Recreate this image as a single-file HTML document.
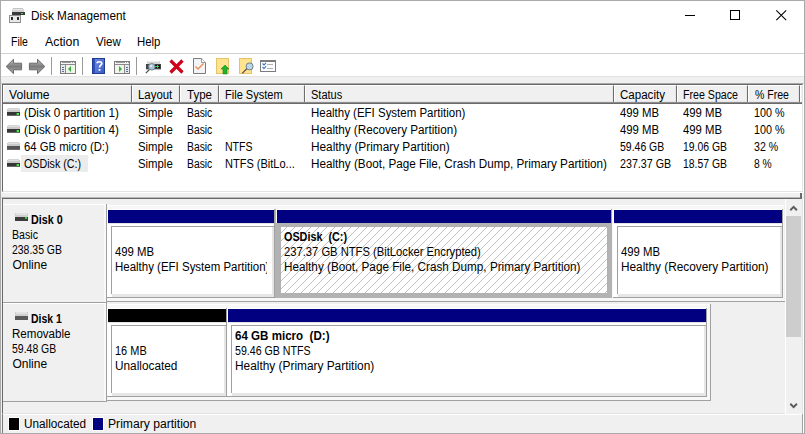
<!DOCTYPE html>
<html><head><meta charset="utf-8">
<style>
html,body{margin:0;padding:0}
body{width:805px;height:434px;overflow:hidden;position:relative;background:#f0f0f0;font-family:"Liberation Sans",sans-serif;font-size:12px;color:#000}
.a{position:absolute;box-sizing:border-box}
.t{position:absolute;white-space:nowrap;line-height:14px;transform-origin:0 0}
.b{font-weight:bold}
svg{position:absolute;overflow:visible}
</style></head><body>
<div class="a" style="left:0px;top:0px;width:805px;height:434px;background:#ffffff;"></div>
<svg style="left:9px;top:8px" width="17" height="16" viewBox="0 0 17 16" shape-rendering="crispEdges"><rect x="4" y="0" width="10" height="1" fill="#c4c4c4"/><rect x="3" y="1" width="12" height="3" fill="#d2d2d2"/><rect x="4" y="1" width="10" height="1" fill="#e6e6e6"/><rect x="3" y="4" width="13" height="3" fill="#3a3a3a"/><rect x="12" y="5" width="2" height="1" fill="#3fd33f"/><rect x="0" y="7" width="12" height="8" fill="#8e8e8e"/><rect x="1" y="8" width="10" height="6" fill="#e8e8e8"/><rect x="2" y="9" width="2" height="3" fill="#2a2a2a"/><rect x="8" y="9" width="2" height="3" fill="#2a2a2a"/></svg>
<div class="t" style="left:30.60px;top:9px;transform:scaleX(0.9794);">Disk Management</div>
<div class="a" style="left:685px;top:15px;width:10px;height:1px;background:#000;"></div>
<div class="a" style="left:730px;top:10px;width:10px;height:10px;border:1px solid #000"></div>
<svg style="left:775px;top:9px" width="13" height="13" viewBox="0 0 13 13"><path d="M1.3 1.3L11.2 11.2M11.2 1.3L1.3 11.2" stroke="#000" stroke-width="1.05"/></svg>
<div class="t" style="left:11.10px;top:35px;transform:scaleX(0.8750);">File</div>
<div class="t" style="left:45.10px;top:35px;transform:scaleX(1.0303);">Action</div>
<div class="t" style="left:95.60px;top:35px;transform:scaleX(0.9615);">View</div>
<div class="t" style="left:136.90px;top:35px;transform:scaleX(0.9480);">Help</div>
<div class="a" style="left:1px;top:53px;width:803px;height:1px;background:#d0d0d0;"></div>
<div class="a" style="left:1px;top:54px;width:803px;height:22px;background:#ffffff;"></div>
<div class="a" style="left:1px;top:76px;width:803px;height:1px;background:#e2e2e2;"></div>
<div class="a" style="left:1px;top:77px;width:803px;height:6px;background:#f0f0f0;"></div>
<div class="a" style="left:51px;top:57px;width:1px;height:18px;background:#9a9a9a;"></div>
<div class="a" style="left:82px;top:57px;width:1px;height:18px;background:#9a9a9a;"></div>
<div class="a" style="left:136px;top:57px;width:1px;height:18px;background:#9a9a9a;"></div>
<svg style="left:0px;top:52px" width="60" height="26" viewBox="0 52 60 26"><defs><linearGradient id="ga" x1="0" y1="0" x2="0" y2="1"><stop offset="0" stop-color="#c4c4c4"/><stop offset="0.5" stop-color="#7c7c7c"/><stop offset="1" stop-color="#b4b4b4"/></linearGradient></defs><path d="M6.2 66.5L13.5 59.3V63.2H21.6V69.8H13.5V73.7Z" fill="url(#ga)" stroke="#6a6a6a" stroke-width="1" stroke-linejoin="round"/><path d="M44.8 66.5L37.5 59.3V63.2H29.4V69.8H37.5V73.7Z" fill="url(#ga)" stroke="#6a6a6a" stroke-width="1" stroke-linejoin="round"/></svg>
<svg style="left:60px;top:61px" width="16" height="13" viewBox="0 0 16 13"><rect x="0" y="0" width="16" height="13" fill="#7c7c7c"/><rect x="1" y="1" width="14" height="11" fill="#f4f4f4"/><rect x="2" y="1" width="9" height="1" fill="#9a9a9a"/><rect x="12" y="1" width="1" height="1" fill="#9a9a9a"/><rect x="14" y="1" width="1" height="1" fill="#9a9a9a"/><rect x="1" y="3" width="14" height="1" fill="#8a8a8a"/><rect x="1" y="4" width="4" height="8" fill="#e6ebf2"/><rect x="5" y="4" width="1" height="8" fill="#8a8a8a"/><rect x="2" y="6" width="2" height="1" fill="#5b6b8a"/><rect x="2" y="8" width="2" height="1" fill="#5b6b8a"/><rect x="2" y="10" width="2" height="1" fill="#5b6b8a"/><rect x="6" y="4" width="9" height="8" fill="#eef6ea"/><path d="M8 8L11 5V11Z" fill="#3fa83f"/></svg>
<svg style="left:114px;top:61px" width="16" height="13" viewBox="0 0 16 13"><rect x="0" y="0" width="16" height="13" fill="#7c7c7c"/><rect x="1" y="1" width="14" height="11" fill="#f4f4f4"/><rect x="2" y="1" width="9" height="1" fill="#9a9a9a"/><rect x="12" y="1" width="1" height="1" fill="#9a9a9a"/><rect x="14" y="1" width="1" height="1" fill="#9a9a9a"/><rect x="1" y="3" width="14" height="1" fill="#8a8a8a"/><rect x="11" y="4" width="4" height="8" fill="#e6ebf2"/><rect x="10" y="4" width="1" height="8" fill="#8a8a8a"/><rect x="12" y="6" width="2" height="1" fill="#5b6b8a"/><rect x="12" y="8" width="2" height="1" fill="#5b6b8a"/><rect x="12" y="10" width="2" height="1" fill="#5b6b8a"/><rect x="1" y="4" width="9" height="8" fill="#eef6ea"/><path d="M5 5L8 8L5 11Z" fill="#3fa83f"/></svg>
<svg style="left:92px;top:58px" width="13" height="16" viewBox="0 0 13 16"><defs><linearGradient id="gh" x1="0" y1="0" x2="1" y2="1"><stop offset="0" stop-color="#6d8ae0"/><stop offset="1" stop-color="#3b5cc4"/></linearGradient></defs><rect x="0" y="0" width="13" height="16" fill="#1f3b94"/><rect x="1" y="1" width="2" height="14" fill="#2c4fb8"/><rect x="3" y="1" width="9" height="14" fill="url(#gh)"/><path d="M5.2 5.2C5.2 3.3 9.8 3.1 9.8 5.4C9.8 7.2 7.5 7.3 7.5 9.6" fill="none" stroke="#fff" stroke-width="1.7"/><rect x="6.6" y="11" width="1.8" height="1.8" fill="#fff"/></svg>
<svg style="left:145px;top:60px" width="16" height="14" viewBox="0 0 16 14"><rect x="2" y="1" width="13" height="3" fill="#d8d8d8"/><rect x="3" y="1" width="11" height="1" fill="#ececec"/><rect x="1" y="4" width="15" height="5" fill="#444"/><rect x="9" y="5" width="6" height="3" fill="#111"/><rect x="10" y="6" width="4" height="1" fill="#3ad34a"/><rect x="12" y="5" width="1" height="3" fill="#3ad34a"/><rect x="1" y="9" width="15" height="1" fill="#bdbdbd"/><circle cx="6.8" cy="6.8" r="3.3" fill="#a9c3d6" stroke="#6b7d8a" stroke-width="0.9"/><circle cx="6" cy="6" r="1.3" fill="#d8e8f2"/><path d="M0.9 13.1L4.3 9.6" stroke="#505050" stroke-width="1.3"/></svg>
<svg style="left:168px;top:58px" width="17" height="17" viewBox="0 0 17 17"><path d="M2.5 2.5L14.5 14.5M14.5 2.5L2.5 14.5" stroke="#d0021b" stroke-width="3.2"/></svg>
<svg style="left:193px;top:58px" width="13" height="16" viewBox="0 0 13 16"><path d="M0.5 0.5H8.5L12.5 4.5V15.5H0.5Z" fill="#f2f4f8" stroke="#7a7a7a" stroke-width="1"/><path d="M8.5 0.5V4.5H12.5" fill="#fff" stroke="#9a9a9a" stroke-width="1"/><path d="M2.5 8.5L5 11L10.5 5.5" fill="none" stroke="#ef8a4a" stroke-width="1.4"/></svg>
<svg style="left:216px;top:58px" width="14" height="16" viewBox="0 0 14 16"><rect x="0.5" y="0.5" width="12" height="15" fill="#ffe38e" stroke="#e6c36a" stroke-width="1"/><path d="M5 11L9 7L13 11H11V16H7V11Z" fill="#22b02e" stroke="#178a20" stroke-width="0.6"/></svg>
<svg style="left:239px;top:58px" width="15" height="16" viewBox="0 0 15 16"><rect x="0.5" y="0.5" width="12" height="15" fill="#ffe38e" stroke="#e6c36a" stroke-width="1"/><circle cx="10.6" cy="8.4" r="3.5" fill="#bcd8e8" stroke="#6e808c" stroke-width="1"/><path d="M3.2 15.4L7.8 10.8" stroke="#555" stroke-width="1.3"/></svg>
<svg style="left:260px;top:60px" width="16" height="12" viewBox="0 0 16 12"><rect x="0" y="0" width="16" height="12" fill="#7c7c7c"/><rect x="1" y="2" width="14" height="9" fill="#fafcff"/><path d="M2.5 3.5L4 5L6 2.8M2.5 7L4 8.5L6 6.3" fill="none" stroke="#3a73c4" stroke-width="1.1"/><rect x="7" y="4" width="6" height="1" fill="#b0b0b0"/><rect x="7" y="8" width="6" height="1" fill="#b0b0b0"/></svg>
<div class="a" style="left:1px;top:83px;width:803px;height:110px;background:#fff;border-top:1px solid #a8a8a8;border-left:1px solid #f0f0f0;border-right:1px solid #fff;border-bottom:1px solid #fff"></div>
<div class="a" style="left:2px;top:84px;width:801px;height:108px;border-top:1px solid #696969;border-left:1px solid #696969;border-right:1px solid #e3e3e3;border-bottom:1px solid #e3e3e3"></div>
<div class="a" style="left:3px;top:85px;width:799px;height:17px;background:#f0f0f0;"></div>
<div class="a" style="left:3px;top:102px;width:799px;height:1px;background:#8c8c8c;"></div>
<div class="a" style="left:3px;top:103px;width:799px;height:1px;background:#6a6a6a;"></div>
<div class="a" style="left:3px;top:85px;width:129px;height:17px;border-top:1px solid #fff;border-left:1px solid #fff;border-right:1px solid #6d6d6d;box-shadow:inset -1px -1px 0 #e6e6e6"></div>
<div class="t" style="left:9.10px;top:88px;transform:scaleX(1.0125);">Volume</div>
<div class="a" style="left:132px;top:85px;width:48px;height:17px;border-top:1px solid #fff;border-left:1px solid #fff;border-right:1px solid #6d6d6d;box-shadow:inset -1px -1px 0 #e6e6e6"></div>
<div class="t" style="left:138.00px;top:88px;transform:scaleX(0.9514);">Layout</div>
<div class="a" style="left:180px;top:85px;width:39px;height:17px;border-top:1px solid #fff;border-left:1px solid #fff;border-right:1px solid #6d6d6d;box-shadow:inset -1px -1px 0 #e6e6e6"></div>
<div class="t" style="left:186.60px;top:88px;transform:scaleX(0.9615);">Type</div>
<div class="a" style="left:219px;top:85px;width:86px;height:17px;border-top:1px solid #fff;border-left:1px solid #fff;border-right:1px solid #6d6d6d;box-shadow:inset -1px -1px 0 #e6e6e6"></div>
<div class="t" style="left:225.35px;top:88px;transform:scaleX(0.9206);">File System</div>
<div class="a" style="left:305px;top:85px;width:309px;height:17px;border-top:1px solid #fff;border-left:1px solid #fff;border-right:1px solid #6d6d6d;box-shadow:inset -1px -1px 0 #e6e6e6"></div>
<div class="t" style="left:311.35px;top:88px;transform:scaleX(0.9191);">Status</div>
<div class="a" style="left:614px;top:85px;width:63px;height:17px;border-top:1px solid #fff;border-left:1px solid #fff;border-right:1px solid #6d6d6d;box-shadow:inset -1px -1px 0 #e6e6e6"></div>
<div class="t" style="left:620.10px;top:88px;transform:scaleX(0.9628);">Capacity</div>
<div class="a" style="left:677px;top:85px;width:71px;height:17px;border-top:1px solid #fff;border-left:1px solid #fff;border-right:1px solid #6d6d6d;box-shadow:inset -1px -1px 0 #e6e6e6"></div>
<div class="t" style="left:683.35px;top:88px;transform:scaleX(0.8871);">Free Space</div>
<div class="a" style="left:748px;top:85px;width:52px;height:17px;border-top:1px solid #fff;border-left:1px solid #fff;border-right:1px solid #6d6d6d;box-shadow:inset -1px -1px 0 #e6e6e6"></div>
<div class="t" style="left:754.60px;top:88px;transform:scaleX(0.8782);">% Free</div>
<div class="a" style="left:800px;top:85px;width:2px;height:17px;border-top:1px solid #fff;border-left:1px solid #fff"></div>
<svg style="left:7px;top:108px" width="13" height="8" viewBox="0 0 13 8" shape-rendering="crispEdges"><rect x="1" y="0" width="11" height="1" fill="#d4d4d4"/><rect x="0" y="1" width="13" height="3" fill="#c9c9c9"/><rect x="1" y="1" width="11" height="1" fill="#e0e0e0"/><rect x="0" y="4" width="13" height="4" fill="#363636"/><rect x="0" y="7" width="13" height="1" fill="#6a6a6a"/><rect x="10" y="5" width="2" height="2" fill="#4fe04f"/><rect x="9" y="5" width="1" height="2" fill="#2f7f2f"/></svg>
<div class="t" style="left:23.60px;top:106px;transform:scaleX(0.9742);">(Disk 0 partition 1)</div>
<div class="t" style="left:138.20px;top:106px;transform:scaleX(0.9459);">Simple</div>
<div class="t" style="left:186.60px;top:106px;transform:scaleX(0.8621);">Basic</div>
<div class="t" style="left:311.35px;top:106px;transform:scaleX(0.9565);">Healthy (EFI System Partition)</div>
<div class="t" style="left:620.10px;top:106px;transform:scaleX(0.9451);">499 MB</div>
<div class="t" style="left:683.10px;top:106px;transform:scaleX(0.9451);">499 MB</div>
<div class="t" style="left:754.10px;top:106px;transform:scaleX(0.8971);">100 %</div>
<svg style="left:7px;top:125px" width="13" height="8" viewBox="0 0 13 8" shape-rendering="crispEdges"><rect x="1" y="0" width="11" height="1" fill="#d4d4d4"/><rect x="0" y="1" width="13" height="3" fill="#c9c9c9"/><rect x="1" y="1" width="11" height="1" fill="#e0e0e0"/><rect x="0" y="4" width="13" height="4" fill="#363636"/><rect x="0" y="7" width="13" height="1" fill="#6a6a6a"/><rect x="10" y="5" width="2" height="2" fill="#4fe04f"/><rect x="9" y="5" width="1" height="2" fill="#2f7f2f"/></svg>
<div class="t" style="left:23.60px;top:123px;transform:scaleX(0.9742);">(Disk 0 partition 4)</div>
<div class="t" style="left:138.20px;top:123px;transform:scaleX(0.9459);">Simple</div>
<div class="t" style="left:186.60px;top:123px;transform:scaleX(0.8621);">Basic</div>
<div class="t" style="left:311.35px;top:123px;transform:scaleX(0.9733);">Healthy (Recovery Partition)</div>
<div class="t" style="left:620.10px;top:123px;transform:scaleX(0.9451);">499 MB</div>
<div class="t" style="left:683.10px;top:123px;transform:scaleX(0.9451);">499 MB</div>
<div class="t" style="left:754.10px;top:123px;transform:scaleX(0.8971);">100 %</div>
<svg style="left:7px;top:142px" width="13" height="8" viewBox="0 0 13 8" shape-rendering="crispEdges"><rect x="1" y="0" width="11" height="1" fill="#d4d4d4"/><rect x="0" y="1" width="13" height="3" fill="#c9c9c9"/><rect x="1" y="1" width="11" height="1" fill="#e0e0e0"/><rect x="0" y="4" width="13" height="4" fill="#555555"/><rect x="0" y="7" width="13" height="1" fill="#6a6a6a"/></svg>
<div class="t" style="left:23.60px;top:140px;transform:scaleX(0.9417);">64 GB micro (D:)</div>
<div class="t" style="left:138.20px;top:140px;transform:scaleX(0.9459);">Simple</div>
<div class="t" style="left:186.60px;top:140px;transform:scaleX(0.8621);">Basic</div>
<div class="t" style="left:225.35px;top:140px;transform:scaleX(0.8790);">NTFS</div>
<div class="t" style="left:311.35px;top:140px;transform:scaleX(0.9858);">Healthy (Primary Partition)</div>
<div class="t" style="left:620.10px;top:140px;transform:scaleX(0.8725);">59.46 GB</div>
<div class="t" style="left:683.10px;top:140px;transform:scaleX(0.8676);">19.06 GB</div>
<div class="t" style="left:754.10px;top:140px;transform:scaleX(0.8839);">32 %</div>
<div class="a" style="left:21px;top:155px;width:67px;height:17px;background:#ececec;"></div>
<svg style="left:7px;top:159px" width="13" height="8" viewBox="0 0 13 8" shape-rendering="crispEdges"><rect x="1" y="0" width="11" height="1" fill="#d4d4d4"/><rect x="0" y="1" width="13" height="3" fill="#c9c9c9"/><rect x="1" y="1" width="11" height="1" fill="#e0e0e0"/><rect x="0" y="4" width="13" height="4" fill="#363636"/><rect x="0" y="7" width="13" height="1" fill="#6a6a6a"/><rect x="10" y="5" width="2" height="2" fill="#4fe04f"/><rect x="9" y="5" width="1" height="2" fill="#2f7f2f"/></svg>
<div class="t" style="left:23.60px;top:157px;transform:scaleX(0.8906);">OSDisk (C:)</div>
<div class="t" style="left:138.20px;top:157px;transform:scaleX(0.9459);">Simple</div>
<div class="t" style="left:186.60px;top:157px;transform:scaleX(0.8621);">Basic</div>
<div class="t" style="left:225.35px;top:157px;transform:scaleX(0.9178);">NTFS (BitLo...</div>
<div class="t" style="left:311.35px;top:157px;transform:scaleX(0.9752);">Healthy (Boot, Page File, Crash Dump, Primary Partition)</div>
<div class="t" style="left:620.10px;top:157px;transform:scaleX(0.8904);">237.37 GB</div>
<div class="t" style="left:683.10px;top:157px;transform:scaleX(0.8676);">18.57 GB</div>
<div class="t" style="left:754.10px;top:157px;transform:scaleX(0.8571);">8 %</div>
<div class="a" style="left:1px;top:193px;width:803px;height:4px;background:#f0f0f0;"></div>
<div class="a" style="left:1px;top:197px;width:803px;height:218px;background:#f0f0f0;border-top:1px solid #b8b8b8;border-left:1px solid #f0f0f0;border-right:1px solid #fff;border-bottom:1px solid #fff"></div>
<div class="a" style="left:2px;top:198px;width:801px;height:216px;border-top:1px solid #696969;border-left:1px solid #696969;border-right:1px solid #e3e3e3;border-bottom:1px solid #e3e3e3"></div>
<div class="a" style="left:3px;top:204px;width:103px;height:99px;background:#f0f0f0;"></div>
<div class="a" style="left:3px;top:204px;width:103px;height:1px;background:#fff;"></div>
<div class="a" style="left:3px;top:302px;width:104px;height:1px;background:#a0a0a0;"></div>
<div class="a" style="left:104px;top:205px;width:2px;height:97px;background:#f8f8f8;"></div>
<div class="a" style="left:106px;top:204px;width:1px;height:99px;background:#a0a0a0;"></div>
<div class="a" style="left:107px;top:205px;width:677px;height:96px;background:#f7f7f7;"></div>
<div class="a" style="left:107px;top:205px;width:677px;height:1px;background:#fff;"></div>
<div class="a" style="left:106px;top:301px;width:679px;height:1px;background:#a0a0a0;"></div>
<svg style="left:15px;top:213px" width="13" height="8" viewBox="0 0 13 8" shape-rendering="crispEdges"><rect x="0" y="0" width="13" height="4" fill="#d0d0d0"/><rect x="1" y="0" width="11" height="2" fill="#e2e2e2"/><rect x="0" y="4" width="13" height="4" fill="#3c3c3c"/><rect x="10" y="4" width="2" height="2" fill="#38d038"/></svg>
<div class="t b" style="left:30.85px;top:213px;transform:scaleX(0.8944);">Disk 0</div>
<div class="t" style="left:12.40px;top:228px;transform:scaleX(0.8862);">Basic</div>
<div class="t" style="left:12.40px;top:243px;transform:scaleX(0.8702);">238.35 GB</div>
<div class="t" style="left:12.40px;top:258px;">Online</div>
<div class="a" style="left:107px;top:209px;width:168px;height:89px;background:#fff;"></div>
<div class="a" style="left:274px;top:209px;width:1px;height:89px;background:#a0a0a0;"></div>
<div class="a" style="left:107px;top:297px;width:168px;height:1px;background:#a0a0a0;"></div>
<div class="a" style="left:108px;top:210px;width:166px;height:13px;background:#000080;"></div>
<div class="a" style="left:108px;top:223px;width:166px;height:1px;background:#e3e3e3;"></div>
<div class="a" style="left:111px;top:226px;width:1px;height:68px;background:#a0a0a0;"></div>
<div class="a" style="left:111px;top:226px;width:163px;height:1px;background:#a0a0a0;"></div>
<div class="a" style="left:272px;top:227px;width:2px;height:70px;background:#e6e6e6;"></div>
<div class="a" style="left:112px;top:294px;width:162px;height:3px;background:#e6e6e6;"></div>
<div class="a" style="left:112px;top:227px;width:155px;height:66px;overflow:hidden">
<div class="t" style="left:2.60px;top:18px;transform:scaleX(0.9451);">499 MB</div>
<div class="t" style="left:2.60px;top:33px;transform:scaleX(0.9565);">Healthy (EFI System Partition)</div>
</div>
<div class="a" style="left:276px;top:209px;width:336px;height:89px;background:#fff;"></div>
<div class="a" style="left:611px;top:209px;width:1px;height:89px;background:#a0a0a0;"></div>
<div class="a" style="left:276px;top:297px;width:336px;height:1px;background:#a0a0a0;"></div>
<div class="a" style="left:277px;top:210px;width:334px;height:13px;background:#000080;"></div>
<div class="a" style="left:277px;top:223px;width:334px;height:1px;background:#e3e3e3;"></div>
<div class="a" style="left:276px;top:223px;width:336px;height:75px;background:#b2b2b2;"></div>
<svg style="left:281px;top:227px" width="326" height="66" shape-rendering="crispEdges"><defs><pattern id="hp281227" x="0" y="0" width="8" height="8" patternUnits="userSpaceOnUse"><rect x="0" y="5" width="1" height="1" fill="#c0c0c0"/><rect x="1" y="4" width="1" height="1" fill="#c0c0c0"/><rect x="2" y="3" width="1" height="1" fill="#c0c0c0"/><rect x="3" y="2" width="1" height="1" fill="#c0c0c0"/><rect x="4" y="1" width="1" height="1" fill="#c0c0c0"/><rect x="5" y="0" width="1" height="1" fill="#c0c0c0"/><rect x="6" y="7" width="1" height="1" fill="#c0c0c0"/><rect x="7" y="6" width="1" height="1" fill="#c0c0c0"/></pattern></defs><rect width="326" height="66" fill="#fff"/><rect width="326" height="66" fill="url(#hp281227)"/></svg>
<div class="a" style="left:281px;top:227px;width:323px;height:66px;overflow:hidden">
<div class="t b" style="left:2.60px;top:3px;transform:scaleX(0.9000);">OSDisk&nbsp; (C:)</div>
<div class="t" style="left:2.60px;top:18px;transform:scaleX(0.9336);">237.37 GB NTFS (BitLocker Encrypted)</div>
<div class="t" style="left:2.60px;top:33px;transform:scaleX(0.9769);">Healthy (Boot, Page File, Crash Dump, Primary Partition)</div>
</div>
<div class="a" style="left:613px;top:209px;width:170px;height:89px;background:#fff;"></div>
<div class="a" style="left:782px;top:209px;width:1px;height:89px;background:#a0a0a0;"></div>
<div class="a" style="left:613px;top:297px;width:170px;height:1px;background:#a0a0a0;"></div>
<div class="a" style="left:614px;top:210px;width:168px;height:13px;background:#000080;"></div>
<div class="a" style="left:614px;top:223px;width:168px;height:1px;background:#e3e3e3;"></div>
<div class="a" style="left:617px;top:226px;width:1px;height:68px;background:#a0a0a0;"></div>
<div class="a" style="left:617px;top:226px;width:165px;height:1px;background:#a0a0a0;"></div>
<div class="a" style="left:780px;top:227px;width:2px;height:70px;background:#e6e6e6;"></div>
<div class="a" style="left:618px;top:294px;width:164px;height:3px;background:#e6e6e6;"></div>
<div class="a" style="left:618px;top:227px;width:157px;height:66px;overflow:hidden">
<div class="t" style="left:2.60px;top:18px;transform:scaleX(0.9451);">499 MB</div>
<div class="t" style="left:2.60px;top:33px;transform:scaleX(0.9833);">Healthy (Recovery Partition)</div>
</div>
<div class="a" style="left:3px;top:303px;width:103px;height:99px;background:#f0f0f0;"></div>
<div class="a" style="left:3px;top:303px;width:103px;height:1px;background:#fff;"></div>
<div class="a" style="left:3px;top:401px;width:104px;height:1px;background:#a0a0a0;"></div>
<div class="a" style="left:104px;top:304px;width:2px;height:97px;background:#f8f8f8;"></div>
<div class="a" style="left:106px;top:303px;width:1px;height:99px;background:#a0a0a0;"></div>
<div class="a" style="left:107px;top:304px;width:603px;height:96px;background:#f7f7f7;"></div>
<div class="a" style="left:107px;top:304px;width:603px;height:1px;background:#fff;"></div>
<div class="a" style="left:106px;top:400px;width:605px;height:1px;background:#a0a0a0;"></div>
<div class="a" style="left:710px;top:304px;width:1px;height:97px;background:#a0a0a0;"></div>
<svg style="left:15px;top:312px" width="13" height="8" viewBox="0 0 13 8" shape-rendering="crispEdges"><rect x="0" y="0" width="13" height="4" fill="#d0d0d0"/><rect x="1" y="0" width="11" height="2" fill="#e2e2e2"/><rect x="0" y="4" width="13" height="4" fill="#5a5a5a"/></svg>
<div class="t b" style="left:30.85px;top:312px;transform:scaleX(0.8681);">Disk 1</div>
<div class="t" style="left:12.40px;top:327px;transform:scaleX(0.9631);">Removable</div>
<div class="t" style="left:12.40px;top:342px;transform:scaleX(0.8725);">59.48 GB</div>
<div class="t" style="left:12.40px;top:357px;">Online</div>
<div class="a" style="left:107px;top:308px;width:120px;height:89px;background:#fff;"></div>
<div class="a" style="left:226px;top:308px;width:1px;height:89px;background:#a0a0a0;"></div>
<div class="a" style="left:107px;top:396px;width:120px;height:1px;background:#a0a0a0;"></div>
<div class="a" style="left:108px;top:309px;width:118px;height:13px;background:#000000;"></div>
<div class="a" style="left:108px;top:322px;width:118px;height:1px;background:#e3e3e3;"></div>
<div class="a" style="left:111px;top:325px;width:1px;height:68px;background:#a0a0a0;"></div>
<div class="a" style="left:111px;top:325px;width:115px;height:1px;background:#a0a0a0;"></div>
<div class="a" style="left:224px;top:326px;width:2px;height:70px;background:#e6e6e6;"></div>
<div class="a" style="left:112px;top:393px;width:114px;height:3px;background:#e6e6e6;"></div>
<div class="a" style="left:112px;top:326px;width:107px;height:66px;overflow:hidden">
<div class="t" style="left:2.60px;top:18px;transform:scaleX(0.9143);">16 MB</div>
<div class="t" style="left:2.60px;top:33px;transform:scaleX(0.9841);">Unallocated</div>
</div>
<div class="a" style="left:227px;top:308px;width:480px;height:89px;background:#fff;"></div>
<div class="a" style="left:706px;top:308px;width:1px;height:89px;background:#a0a0a0;"></div>
<div class="a" style="left:227px;top:396px;width:480px;height:1px;background:#a0a0a0;"></div>
<div class="a" style="left:228px;top:309px;width:478px;height:13px;background:#000080;"></div>
<div class="a" style="left:228px;top:322px;width:478px;height:1px;background:#e3e3e3;"></div>
<div class="a" style="left:231px;top:325px;width:1px;height:68px;background:#a0a0a0;"></div>
<div class="a" style="left:231px;top:325px;width:475px;height:1px;background:#a0a0a0;"></div>
<div class="a" style="left:704px;top:326px;width:2px;height:70px;background:#e6e6e6;"></div>
<div class="a" style="left:232px;top:393px;width:474px;height:3px;background:#e6e6e6;"></div>
<div class="a" style="left:232px;top:326px;width:467px;height:66px;overflow:hidden">
<div class="t b" style="left:2.60px;top:3px;transform:scaleX(0.9643);">64 GB micro&nbsp; (D:)</div>
<div class="t" style="left:2.60px;top:18px;transform:scaleX(0.8853);">59.46 GB NTFS</div>
<div class="t" style="left:2.60px;top:33px;transform:scaleX(0.9894);">Healthy (Primary Partition)</div>
</div>
<div class="a" style="left:275px;top:209px;width:1px;height:89px;background:#b2b2b2;"></div>
<div class="a" style="left:800px;top:193px;width:2px;height:6px;background:#6a6a6a;"></div>
<div class="a" style="left:802px;top:197px;width:1px;height:2px;background:#f0f0f0;"></div>
<div class="a" style="left:785px;top:199px;width:17px;height:215px;background:#f0f0f0;box-shadow:inset 1px 0 0 #fff"></div>
<div class="a" style="left:786px;top:216px;width:15px;height:121px;background:#cdcdcd;"></div>
<svg style="left:789px;top:204px" width="10" height="8" viewBox="0 0 10 8"><path d="M1.3 6.2L4.6 2.9L7.9 6.2" fill="none" stroke="#5a5a5a" stroke-width="2"/></svg>
<svg style="left:789px;top:402px" width="10" height="8" viewBox="0 0 10 8"><path d="M1.3 1.8L4.6 5.1L7.9 1.8" fill="none" stroke="#5a5a5a" stroke-width="2"/></svg>
<div class="a" style="left:1px;top:415px;width:802px;height:18px;background:#f0f0f0;"></div>
<div class="a" style="left:802px;top:414px;width:1px;height:19px;background:#a0a0a0;"></div>
<div class="a" style="left:2px;top:414px;width:1px;height:19px;background:#7a7a7a;"></div>
<div class="a" style="left:8px;top:417px;width:12px;height:14px;background:#fff;"></div>
<div class="a" style="left:9px;top:418px;width:10px;height:12px;background:#000;"></div>
<div class="t" style="left:24.20px;top:417px;transform:scaleX(0.9810);">Unallocated</div>
<div class="a" style="left:92px;top:417px;width:12px;height:14px;background:#fff;"></div>
<div class="a" style="left:93px;top:418px;width:10px;height:12px;background:#000080;"></div>
<div class="t" style="left:107.60px;top:417px;transform:scaleX(1.0115);">Primary partition</div>
<div class="a" style="left:0;top:0;width:805px;height:434px;border:1px solid #aaaaaa"></div>
</body></html>
